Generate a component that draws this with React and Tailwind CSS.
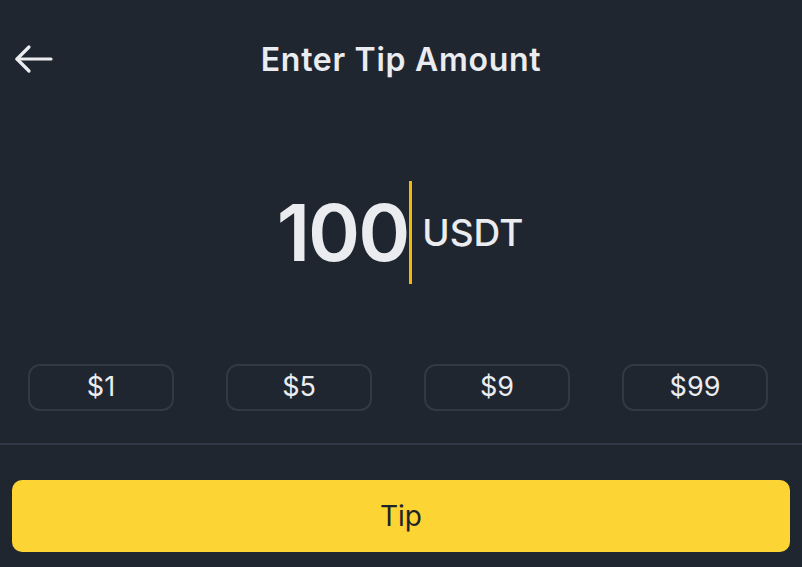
export default function App() {
  const presets = ["$1", "$5", "$9", "$99"];
  return (
    <div
      className="w-[802px] h-[567px] bg-[#202630] text-[#eaecef] overflow-hidden flex flex-col"
      style={{ fontFamily: "Inter, 'Noto Sans', sans-serif" }}
    >
      <div className="relative h-[60px] mt-[30px] flex items-center justify-center">
        <button className="absolute left-[14px] top-[14px] text-[#eaecef]">
          <svg width="40" height="32" viewBox="0 0 40 32" fill="none" stroke="currentColor" strokeWidth="3.2" strokeLinecap="round" strokeLinejoin="round">
            <path d="M37 15H3" />
            <path d="M15 3L3 15l12 12" />
          </svg>
        </button>
        <h1 className="text-[32px] font-semibold tracking-[0.7px] leading-[60px] pl-[-2px]">Enter Tip Amount</h1>
      </div>

      <div className="h-[150px] mt-[67px] flex items-center justify-center">
        <div className="flex items-center pr-[2px]">
          <span className="text-[79px] font-semibold leading-none tracking-[-2px]">100</span>
          <span className="w-[3px] h-[103px] bg-[#f0b90b] ml-[1px]" />
          <span className="text-[37px] font-medium ml-[10px] leading-none">USDT</span>
        </div>
      </div>

      <div className="mt-[57px] pl-[28px] flex gap-[52px]">
        {presets.map((p) => (
          <button
            key={p}
            className="w-[146px] h-[47px] rounded-[12px] border-2 border-[#323844] text-[27px] flex items-center justify-center"
          >
            {p}
          </button>
        ))}
      </div>

      <div className="mt-[32px] h-[2px] bg-[#313744]" />

      <div className="px-[12px] mt-[35px]">
        <button className="w-full h-[72px] rounded-[10px] bg-[#fcd535] text-[#1e2329] text-[28px] flex items-center justify-center">
          Tip
        </button>
      </div>
    </div>
  );
}
